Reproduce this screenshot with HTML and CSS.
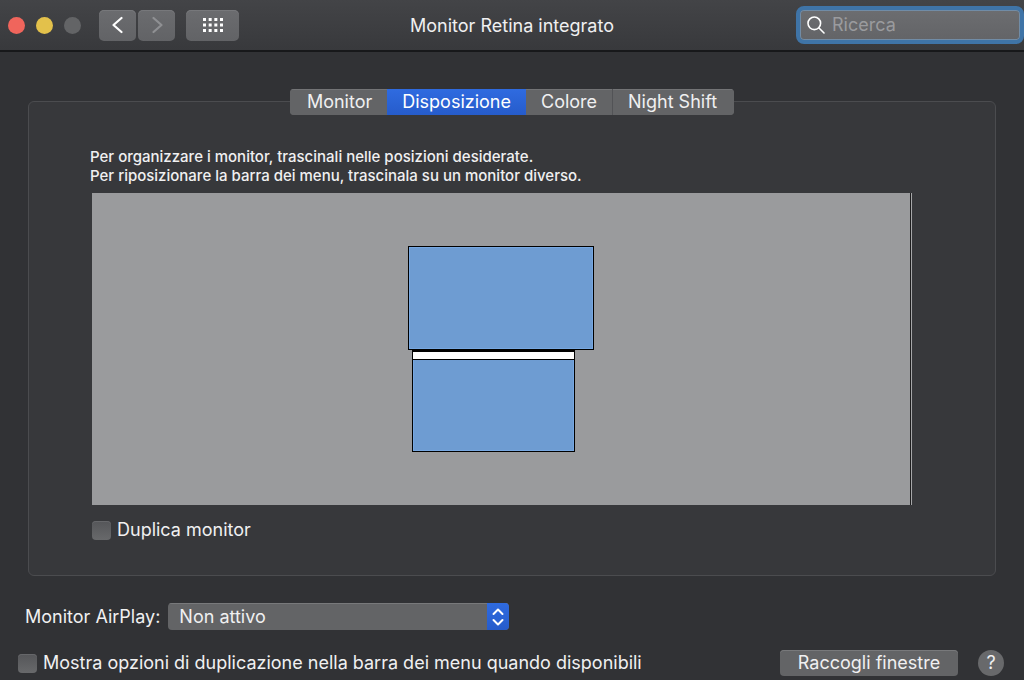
FILE: index.html
```html
<!DOCTYPE html>
<html lang="it">
<head>
<meta charset="utf-8">
<title>Monitor Retina integrato</title>
<link rel="stylesheet" href="styles.css">
</head>
<body>
<header class="toolbar">
  <div class="toolbar-left">
    <div class="lights">
      <button class="light light-close" aria-label="Chiudi"></button>
      <button class="light light-min" aria-label="Riduci"></button>
      <button class="light light-zoom" aria-label="Ingrandisci" disabled></button>
    </div>
    <div class="nav">
      <button class="tool" aria-label="Indietro"><svg width="12" height="18" viewBox="0 0 12 18"><path d="M9.500 2 1.500 9l8 7" fill="none" stroke="#fff" stroke-width="2.2" stroke-linecap="round" stroke-linejoin="round"/></svg></button>
      <button class="tool" aria-label="Avanti" disabled><svg width="12" height="18" viewBox="0 0 12 18"><path d="M2.500 2l8 7-8 7" fill="none" stroke="#8f9093" stroke-width="2.2" stroke-linecap="round" stroke-linejoin="round"/></svg></button>
    </div>
    <button class="tool tool-grid" aria-label="Mostra tutte">
      <svg width="20" height="14" viewBox="0 0 20 14" fill="#fff"><path d="M0 0h3v3H0zM5.67 0h3v3h-3zM11.33 0h3v3h-3zM17 0h3v3h-3zM0 5.5h3v3H0zM5.67 5.5h3v3h-3zM11.33 5.5h3v3h-3zM17 5.5h3v3h-3zM0 11h3v3H0zM5.67 11h3v3h-3zM11.33 11h3v3h-3zM17 11h3v3h-3z"/></svg>
    </button>
  </div>
  <h1 class="title">Monitor Retina integrato</h1>
  <label class="search">
    <svg width="18" height="18" viewBox="0 0 18 18" fill="none" stroke="#fff" stroke-width="1.6" stroke-linecap="round"><circle cx="7.3" cy="7.3" r="6.3"/><path d="M12 12l5 5"/></svg>
    <input class="search-input" type="text" placeholder="Ricerca" aria-label="Ricerca">
  </label>
</header>
<main class="content">
  <section class="group">
    <nav class="tabs">
      <button class="tab">Monitor</button>
      <button class="tab tab-active">Disposizione</button>
      <button class="tab">Colore</button>
      <button class="tab tab-divided">Night Shift</button>
    </nav>
    <div class="panel">
      <p class="hint">Per organizzare i monitor, trascinali nelle posizioni desiderate.<br>Per riposizionare la barra dei menu, trascinala su un monitor diverso.</p>
      <div class="canvas">
        <div class="display display-external"></div>
        <div class="display display-main"><div class="menubar"></div></div>
      </div>
      <label class="check"><input class="box" type="checkbox">Duplica monitor</label>
    </div>
  </section>
  <div class="airplay">
    <label for="airplay">Monitor AirPlay:</label>
    <div class="popup">
      <select class="popup-select" id="airplay"><option>Non attivo</option></select>
      <span class="popup-arrows"><svg width="12" height="18" viewBox="0 0 12 18" fill="none" stroke="#fff" stroke-width="2" stroke-linecap="round" stroke-linejoin="round"><path d="M1.500 6 6 1.500 10.500 6M1.500 12 6 16.500 10.500 12"/></svg></span>
    </div>
  </div>
  <footer class="footer">
    <label class="check"><input class="box" type="checkbox">Mostra opzioni di duplicazione nella barra dei menu quando disponibili</label>
    <div class="actions">
      <button class="push">Raccogli finestre</button>
      <button class="help" aria-label="Aiuto">?</button>
    </div>
  </footer>
</main>
</body>
</html>
```
FILE: styles.css
```css
* { box-sizing: border-box; }
body {
  margin: 0;
  background: #313235;
  color: #f0f0f1;
  font: 18px/22px Inter, "Liberation Sans", sans-serif;
}
button, input, select { font: inherit; color: inherit; margin: 0; border: 0; padding: 0; }
svg { display: block; flex: none; }

.toolbar {
  display: grid;
  grid-template-columns: 1fr auto 1fr;
  align-items: center;
  height: 52px;
  background: linear-gradient(#434447, #38393c);
  border-bottom: 2px solid #17181a;
}
.toolbar-left { display: flex; align-items: center; padding-left: 8px; }
.lights { display: flex; gap: 11px; margin-right: 18px; }
.light { width: 17px; height: 17px; border-radius: 50%; }
.light-close { background: #f0655c; }
.light-min { background: #e3c14b; }
.light-zoom { background: #636466; }
.nav { display: flex; gap: 2px; margin-right: 11px; }
.tool {
  display: flex;
  align-items: center;
  justify-content: center;
  width: 37px;
  height: 31px;
  border-radius: 5px;
  background: linear-gradient(#6b6c6f, #626366);
  box-shadow: inset 0 1px #77787b;
}
.tool-grid { width: 53px; }
.title { margin: 0; padding-top: 2px; font-size: 18px; font-weight: 400; line-height: 22px; }
.search {
  justify-self: end;
  display: flex;
  align-items: center;
  gap: 7px;
  width: 228px;
  height: 38px;
  padding-left: 7px;
  border: 4px solid #3f74a7;
  border-radius: 8px;
  background: linear-gradient(#6c6d70, #636467);
  box-shadow: inset 0 0 0 1px #718ca6;
}
.search-input { flex: 1; min-width: 0; background: none; outline: 0; }
.search-input::placeholder { color: #9a9b9e; opacity: 1; }

.content { padding: 49px 20px 0 18px; }
.group {
  margin: 0 8px 0 10px;
  border: 1px solid #4b4c4f;
  border-radius: 6px;
  background: #37383b;
}
.panel { padding: 32px 83px 34px 63px; }
.tabs {
  display: flex;
  width: max-content;
  margin: -13px auto 0;
  border-radius: 4px;
  overflow: hidden;
  background: #636466;
}
.tab { height: 26px; padding: 0 15px; background: #636466; box-shadow: inset 0 1px #737476; }
.tab:first-child { padding-left: 17px; }
.tab:last-child { padding-right: 17px; }
.tab-active { background: linear-gradient(#2f6be0, #265ccb); box-shadow: none; color: #fff; }
.tab-divided { border-left: 1px solid #525356; }
.hint { margin: 0 0 8px -2px; font-size: 15px; font-weight: 500; line-height: 19px; }
.canvas {
  position: relative;
  height: 312px;
  background: #9a9b9d;
  border-right: 1px solid #a6a7a9;
  box-shadow: inset -1px 0 #1d1d1e;
}
.display { position: absolute; border: 1px solid #000; background: #6e9cd2; box-shadow: inset 0 0 0 1px #77a8e2; }
.display-external { left: 316px; top: 53px; width: 186px; height: 104px; }
.display-main { left: 320px; top: 157px; width: 163px; height: 102px; border-top-width: 2px; }
.menubar { height: 8px; background: #fff; border-bottom: 1px solid #000; }

.check { display: flex; align-items: center; gap: 6px; }
.group .check { margin-top: 14px; }
.box {
  appearance: none;
  width: 19px;
  height: 19px;
  border-radius: 4px;
  background: linear-gradient(#555659, #68696b);
  box-shadow: inset 0 1px #66676a;
}
.airplay { display: flex; align-items: center; gap: 8px; margin: 27px 0 0 7px; }
.popup { display: flex; position: relative; width: 341px; border-radius: 4px; overflow: hidden; }
.popup-select {
  appearance: none;
  flex: 1;
  height: 27px;
  padding-left: 11px;
  background: #636466;
  box-shadow: inset 0 1px #78797b;
}
.popup-arrows {
  display: flex;
  align-items: center;
  justify-content: center;
  position: absolute;
  top: 0;
  right: 0;
  bottom: 0;
  width: 22px;
  background: linear-gradient(#2f6be0, #265ccb);
  pointer-events: none;
}
.footer { display: flex; align-items: center; justify-content: space-between; margin-top: 20px; }
.actions { display: flex; align-items: center; gap: 20px; }
.push { width: 178px; height: 26px; border-radius: 4px; background: #636466; box-shadow: inset 0 1px #78797b; }
.help { width: 26px; height: 26px; border-radius: 50%; background: #68696b; }
```
